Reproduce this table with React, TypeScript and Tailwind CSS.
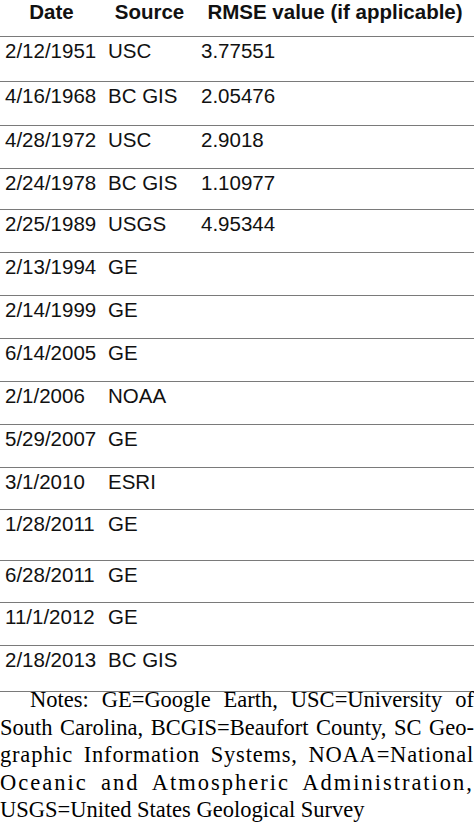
const rows: { date: string; source: string; rmse: string; h: string }[] = [
  { date: "2/12/1951", source: "USC", rmse: "3.77551", h: "h-[45px]" },
  { date: "4/16/1968", source: "BC GIS", rmse: "2.05476", h: "h-[44px]" },
  { date: "4/28/1972", source: "USC", rmse: "2.9018", h: "h-[43px]" },
  { date: "2/24/1978", source: "BC GIS", rmse: "1.10977", h: "h-[41px]" },
  { date: "2/25/1989", source: "USGS", rmse: "4.95344", h: "h-[43px]" },
  { date: "2/13/1994", source: "GE", rmse: "", h: "h-[43px]" },
  { date: "2/14/1999", source: "GE", rmse: "", h: "h-[43px]" },
  { date: "6/14/2005", source: "GE", rmse: "", h: "h-[43px]" },
  { date: "2/1/2006", source: "NOAA", rmse: "", h: "h-[43px]" },
  { date: "5/29/2007", source: "GE", rmse: "", h: "h-[43px]" },
  { date: "3/1/2010", source: "ESRI", rmse: "", h: "h-[42px]" },
  { date: "1/28/2011", source: "GE", rmse: "", h: "h-[51px]" },
  { date: "6/28/2011", source: "GE", rmse: "", h: "h-[42px]" },
  { date: "11/1/2012", source: "GE", rmse: "", h: "h-[43px]" },
  { date: "2/18/2013", source: "BC GIS", rmse: "", h: "h-[47px]" },
];

export default function App() {
  return (
    <div className="w-[474px] h-[827px] overflow-hidden bg-white text-[#111]">
      {/* Tabla */}
      <div className="font-['Liberation_Sans',Arial,sans-serif] text-[20.5px]">
        <div className="grid grid-cols-[103px_93px_1fr] h-[36px] leading-[24px] font-bold">
          <div className="text-center">Date</div>
          <div className="text-center">Source</div>
          <div className="text-center">RMSE value (if applicable)</div>
        </div>
        {rows.map((r, i) => (
          <div
            key={r.date}
            className={`grid grid-cols-[103px_93px_1fr] ${r.h} border-t border-[#7a7a7a] pt-[2px] leading-[24px] ${
              i === rows.length - 1 ? "border-b" : ""
            }`}
          >
            <div className="pl-[5px]">{r.date}</div>
            <div className="pl-[5px]">{r.source}</div>
            <div className="pl-[5px]">{r.rmse}</div>
          </div>
        ))}
      </div>

      {/* Notas */}
      <div className="-mt-[6px] font-['Liberation_Serif','Times_New_Roman',serif] text-[22.5px] leading-[27.5px] text-black">
        <div className="pl-[30px] text-justify [text-align-last:justify] whitespace-nowrap">
          Notes: GE=Google Earth, USC=University of
        </div>
        <div className="text-justify [text-align-last:justify] whitespace-nowrap">
          South Carolina, BCGIS=Beaufort County, SC Geo-
        </div>
        <div className="text-justify [text-align-last:justify] whitespace-nowrap tracking-[0.8px]">
          graphic Information Systems, NOAA=National
        </div>
        <div className="text-justify [text-align-last:justify] whitespace-nowrap tracking-[2px]">
          Oceanic and Atmospheric Administration,
        </div>
        <div className="whitespace-nowrap">USGS=United States Geological Survey</div>
      </div>
    </div>
  );
}
